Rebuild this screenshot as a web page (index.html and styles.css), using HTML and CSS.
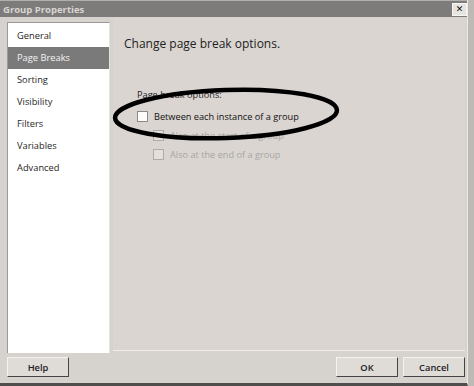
FILE: index.html
```html
<!DOCTYPE html>
<html lang="en">
<head>
    <meta charset="UTF-8">
    <title>Group Properties</title>
    <link rel="stylesheet" href="styles.css">
</head>
<body>

    <div class="window">
        <!-- Title bar -->
        <div class="titlebar">
            <span class="title">Group Properties</span>
            <span class="close">&#x2715;</span>
        </div>

        <div class="main">
            <ul class="nav">
                <li>General</li>
                <li class="active">Page Breaks</li>
                <li>Sorting</li>
                <li>Visibility</li>
                <li>Filters</li>
                <li>Variables</li>
                <li>Advanced</li>
            </ul>

            <div class="content">
                <div class="heading">Change page break options.</div>
                <div class="options">
                    <div class="group-label">Page break options:</div>
                    <label class="check">
                        <span class="box"></span>
                        Between each instance of a group
                    </label>
                    <label class="check sub disabled">
                        <span class="box"></span>
                        Also at the start of a group
                    </label>
                    <label class="check sub disabled">
                        <span class="box"></span>
                        Also at the end of a group
                    </label>
                </div>
            </div>
        </div>

        <div class="footer">
            <button class="btn">Help</button>
            <div class="right-buttons">
                <button class="btn">OK</button>
                <button class="btn">Cancel</button>
            </div>
        </div>

        <!-- hand drawn marker circle -->
        <svg class="marker" width="474" height="386" viewBox="0 0 474 386">
            <ellipse cx="226" cy="114" rx="111" ry="24" transform="rotate(-2 226 114)"
                     fill="none" stroke="#000" stroke-width="4.5"/>
        </svg>
    </div>

</body>
</html>
```

FILE: styles.css
```css
body {
    margin: 0;
    background-color: #bdbab6;
    font-family: 'Open Sans', sans-serif;
}

.window {
    position: relative;
    width: 467px;
    height: 383px;
    background-color: #d6d2ce;
    border-bottom: 3px solid #4f4e4d;
    box-sizing: content-box;
    border-right: 1px solid #ece9e6;
}

.titlebar {
    height: 16px;
    border-top: 1px solid #b2b0ae;
    background-color: #7e7c7b;
    display: flex;
    align-items: center;
    justify-content: space-between;
    padding: 0 0 0 3px;
}

.title {
    color: #d8d5d2;
    font-size: 9.5px;
    font-weight: bold;
}

.close {
    width: 13px;
    height: 11px;
    background-color: #e6e4e1;
    border: 1px solid #f7f6f5;
    color: #111;
    font-family: 'DejaVu Sans', sans-serif;
    font-size: 9px;
    font-weight: bold;
    line-height: 11px;
    text-align: center;
}

.main {
    display: flex;
    height: 335px;
}

.nav {
    list-style: none;
    margin: 5px 0 0 7px;
    padding: 2px 0 0 0;
    width: 101px;
    height: 328px;
    background-color: #fff;
    border-left: 1px solid #9c9a98;
    border-top: 1px solid #9c9a98;
    border-right: 1px solid #e4e2df;
}

.nav li {
    height: 22px;
    line-height: 21px;
    padding-left: 9px;
    font-size: 9.3px;
    color: #1e1e1e;
}

.nav .active {
    background-color: #7b7a7a;
    color: #f4f4f4;
}

.content {
    flex: 1;
    margin-left: 3px;
    margin-right: 2px;
    margin-bottom: 1px;
    background-color: #dad5d1;
    border-bottom: 1px solid #f0eeec;
}

.heading {
    padding: 18px 0 0 11px;
    font-size: 12px;
    line-height: 18px;
    color: #222;
}

.options {
    padding: 35px 0 0 24px;
}

.group-label {
    font-size: 9.2px;
    line-height: 13px;
    color: #222;
    margin-bottom: 6px;
}

.check {
    display: flex;
    align-items: center;
    gap: 6px;
    height: 19px;
    font-size: 9.2px;
    color: #111;
}

.check .box {
    width: 9px;
    height: 9px;
    background-color: #fcfcfc;
    border: 1px solid #8c8a88;
}

.check.sub {
    padding-left: 16px;
}

.check.disabled {
    color: #a8a5a2;
}

.check.disabled .box {
    background-color: #e2dfdc;
    border-color: #aeaba8;
}

.footer {
    display: flex;
    justify-content: space-between;
    padding: 5px 2px 0 7px;
}

.right-buttons {
    display: flex;
    gap: 5px;
}

.btn {
    width: 62px;
    height: 20px;
    padding: 0;
    font-family: 'Open Sans', sans-serif;
    font-size: 9.3px;
    font-weight: 600;
    color: #222;
    background-color: #dfdbd7;
    border: 1px solid;
    border-color: #f4f2f0 #444 #444 #f4f2f0;
}

.marker {
    position: absolute;
    left: 0;
    top: 0;
    pointer-events: none;
}
```
